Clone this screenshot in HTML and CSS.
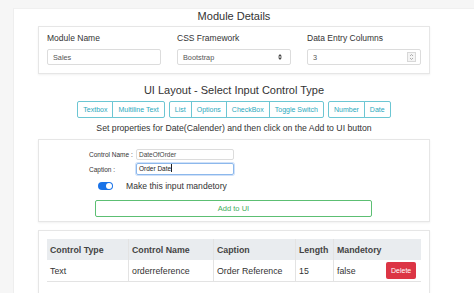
FILE: index.html
```html
<!DOCTYPE html>
<html lang="en">
<head>
    <meta charset="UTF-8">
    <meta name="viewport" content="width=device-width, initial-scale=1.0">
    <title>Module Designer</title>
    <link rel="stylesheet" href="styles.css">
</head>
<body>
    <div class="page">
        <div class="content">
            <h2>Module Details</h2>
            <div class="card details">
                <div class="field">
                    <label>Module Name</label>
                    <div class="input">Sales</div>
                </div>
                <div class="field">
                    <label>CSS Framework</label>
                    <div class="input">Bootstrap
                        <svg class="arrows" width="4" height="6" viewBox="0 0 4 6"><path d="M0 2.4 L2 0 L4 2.4 Z M0 3.6 L2 6 L4 3.6 Z" fill="#444"/></svg>
                    </div>
                </div>
                <div class="field">
                    <label>Data Entry Columns</label>
                    <div class="input">3
                        <svg class="spin" width="9" height="10" viewBox="0 0 9 10"><rect x="0.5" y="0.5" width="8" height="9" fill="#f4f4f4" stroke="#d8d8d8"/><path d="M3 4 L4.5 2.5 L6 4 M3 6 L4.5 7.5 L6 6" fill="none" stroke="#999" stroke-width="0.8"/></svg>
                    </div>
                </div>
            </div>

            <h3>UI Layout - Select Input Control Type</h3>
            <div class="toolbar">
                <div class="btn-group">
                    <span class="btn">Textbox</span>
                    <span class="btn">Multiline Text</span>
                </div>
                <div class="btn-group">
                    <span class="btn">List</span>
                    <span class="btn">Options</span>
                    <span class="btn">CheckBox</span>
                    <span class="btn">Toggle Switch</span>
                </div>
                <div class="btn-group">
                    <span class="btn">Number</span>
                    <span class="btn">Date</span>
                </div>
            </div>
            <p class="hint">Set properties for Date(Calender) and then click on the Add to UI button</p>

            <div class="card props">
                <div class="prop-row">
                    <span class="prop-label">Control Name :</span>
                    <div class="small-input">DateOfOrder</div>
                </div>
                <div class="prop-row">
                    <span class="prop-label">Caption :</span>
                    <div class="small-input focus">Order Date<span class="caret"></span></div>
                </div>
                <div class="switch-row">
                    <span class="switch"><span class="knob"></span></span>
                    <span>Make this input mandetory</span>
                </div>
                <div class="add-btn">Add to UI</div>
            </div>

            <div class="card list">
                <table class="table">
                    <tr>
                        <th>Control Type</th>
                        <th>Control Name</th>
                        <th>Caption</th>
                        <th>Length</th>
                        <th>Mandetory</th>
                        <th></th>
                    </tr>
                    <tr>
                        <td>Text</td>
                        <td>orderreference</td>
                        <td>Order Reference</td>
                        <td>15</td>
                        <td>false</td>
                        <td><span class="delete">Delete</span></td>
                    </tr>
                </table>
            </div>
        </div>
    </div>
</body>
</html>
```

FILE: styles.css
```css
body {
    margin: 0;
    background-color: #f6f6f6;
    font-family: "Liberation Sans", Arial, sans-serif;
    color: #333;
    height: 293px;
    overflow: hidden;
}
.page {
    margin: 8px 0 0 13px;
    background-color: #fff;
    border-top: 1px solid #f0f0f0;
    border-left: 1px solid #eee;
    padding-left: 24px;
    min-height: 300px;
}
.content {
    width: 392px;
}
h2 {
    margin: 0;
    font-size: 11px;
    font-weight: normal;
    text-align: center;
    line-height: 14px;
}
h3 {
    margin: 10px 0 0;
    font-size: 11px;
    font-weight: normal;
    text-align: center;
    line-height: 13px;
}
.card {
    border: 1px solid #e6e6e6;
    box-shadow: 0 1px 2px rgba(0, 0, 0, 0.06);
    background-color: #fff;
}
.details {
    margin-top: 3px;
    padding: 6px 8px 8px;
    display: grid;
    grid-template-columns: 114px 114px 114px;
    column-gap: 16px;
}
.field label {
    display: block;
    font-size: 8.5px;
    line-height: 11px;
    margin-bottom: 5px;
}
.input {
    height: 14px;
    border: 1px solid #dcdcdc;
    border-radius: 2px;
    font-size: 7.3px;
    padding: 0 5px;
    color: #555;
    display: flex;
    justify-content: space-between;
    align-items: center;
}
.arrows {
    margin-right: 3px;
}
.spin {
    margin-right: -1px;
}
.toolbar {
    display: flex;
    justify-content: center;
    gap: 4px;
    margin-top: 4px;
}
.btn-group {
    display: flex;
}
.btn {
    font-size: 7px;
    color: #2aa9bd;
    border: 1px solid #6cc6d3;
    padding: 0 5px;
    line-height: 15px;
    height: 15px;
    margin-left: -1px;
}
.btn-group .btn:first-child {
    border-radius: 2px 0 0 2px;
    margin-left: 0;
}
.btn-group .btn:last-child {
    border-radius: 0 2px 2px 0;
}
.hint {
    margin: 5px 0 0;
    font-size: 8.7px;
    text-align: center;
    line-height: 11px;
}
.props {
    margin-top: 5px;
    padding: 9px 0 4px 50px;
    height: 68px;
}
.prop-row {
    display: flex;
    align-items: center;
    margin-bottom: 3px;
}
.prop-label {
    width: 47px;
    font-size: 6.5px;
}
.small-input {
    width: 92px;
    height: 9px;
    border: 1px solid #dcdcdc;
    border-radius: 2px;
    font-size: 6.5px;
    line-height: 9px;
    padding: 0 2px;
    color: #444;
}
.small-input.focus {
    height: 10px;
    line-height: 10px;
    border-color: #8cb8ec;
    box-shadow: 0 0 0 1px rgba(120, 170, 235, 0.35);
    color: #222;
}
.caret {
    display: inline-block;
    width: 1px;
    height: 8px;
    background-color: #222;
    vertical-align: -1px;
}
.switch-row {
    display: flex;
    align-items: center;
    gap: 13px;
    margin: 6px 0 0 9px;
    font-size: 8.6px;
}
.switch {
    width: 13px;
    height: 8px;
    border-radius: 4px;
    background-color: #1a73e8;
    display: flex;
    justify-content: flex-end;
    align-items: center;
    padding: 0 1px;
}
.knob {
    width: 6px;
    height: 6px;
    border-radius: 50%;
    background-color: #fff;
}
.add-btn {
    margin: 9px 0 0 6px;
    width: 275px;
    height: 15px;
    border: 1px solid #5cbf73;
    border-radius: 2px;
    color: #3fae5a;
    font-size: 7.5px;
    line-height: 15px;
    text-align: center;
}
.list {
    margin-top: 8px;
    padding: 8px 8px 20px;
}
.table {
    border-collapse: collapse;
    table-layout: fixed;
    width: 374px;
    font-size: 8.8px;
}
.table th, .table td {
    text-align: left;
    padding: 0 3px;
    border-right: 1px solid #e3e3e3;
}
.table th:last-child, .table td:last-child,
.table th:nth-child(5), .table td:nth-child(5) {
    border-right: none;
}
.table th {
    height: 21px;
    background-color: #e9ecef;
    font-weight: bold;
    color: #444;
}
.table td {
    height: 21px;
    border-bottom: 1px solid #e3e3e3;
    color: #333;
}
.table th:nth-child(1) { width: 75px; }
.table th:nth-child(2) { width: 78px; }
.table th:nth-child(3) { width: 75px; }
.table th:nth-child(4) { width: 31px; }
.table th:nth-child(5) { width: 42px; }
.delete {
    display: inline-block;
    background-color: #dc3545;
    color: #fff;
    font-size: 7px;
    border-radius: 2px;
    padding: 0 5px;
    line-height: 17px;
    margin-left: 1px;
}
```
